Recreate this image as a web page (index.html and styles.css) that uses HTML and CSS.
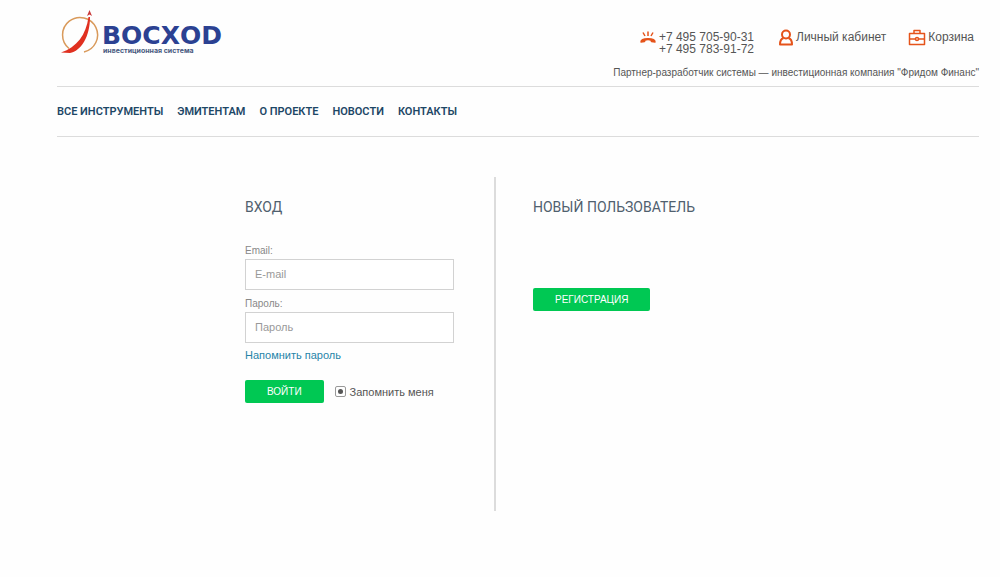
FILE: index.html
```html
<!DOCTYPE html>
<html lang="ru">

<head>
	<meta charset="utf-8">
	<title>Восход — вход</title>
	<meta name="viewport" content="width=device-width, initial-scale=1">
	<link rel="stylesheet" href="styles.css">
</head>

<body>
	<header class="header">
		<a class="logo" href="#">
			<svg class="logo-mark" viewBox="0 0 40 46" aria-hidden="true">
				<path d="M9 38.500A17.500 17.500 0 1 1 24 42" fill="none" stroke="#d99a5b" stroke-width="1.500"/>
				<path d="M1 42.500C17 37 26 25 28.500 7H30C30 27 21 41 10 43Z" fill="#e03020"/>
				<path d="M29.500 0L32 6L29.500 4.500L27 6Z" fill="#c93a3a"/>
			</svg>
			<span class="logo-text">
				<b class="logo-name">ВОСХОD</b>
				<span class="logo-tagline">инвестиционная система</span>
			</span>
		</a>
		<div class="contacts">
			<div class="contacts-row">
				<div class="contact">
					<svg class="icon" viewBox="0 0 18 18" aria-hidden="true">
						<path d="M2 14C2 9.500 16 9.500 16 14L12.500 13.500L12 12Q9 11 6 12L5.500 13.500Z" fill="#e5531a" stroke="#e5531a" stroke-width="1.500" stroke-linejoin="round"/>
						<path d="M9 3.500V8M4 4.500L6 8M14 4.500L12 8" fill="none" stroke="#e5531a" stroke-width="1.500"/>
					</svg>
					<div class="phones">
						<a href="tel:+74957059031">+7 495 705-90-31</a>
						<a href="tel:+74957839172">+7 495 783-91-72</a>
					</div>
				</div>
				<a class="contact" href="#">
					<svg class="icon" viewBox="0 0 18 18" aria-hidden="true">
						<circle cx="10" cy="6.500" r="4" fill="none" stroke="#e5531a" stroke-width="2"/>
						<path d="M7.500 10C4.500 11 4 13 4 16.500H16C16 13 15.500 11 12.500 10" fill="none" stroke="#e5531a" stroke-width="2" stroke-linejoin="round"/>
					</svg>
					Личный кабинет
				</a>
				<a class="contact" href="#">
					<svg class="icon" viewBox="0 0 18 18" aria-hidden="true">
						<path d="M1.500 5.500H16.500V16.500H1.500ZM6 5V2.500H12V5M2 11H7M11 11H16" fill="none" stroke="#e5531a" stroke-width="1.500" stroke-linejoin="round"/>
						<circle cx="9" cy="11" r="1.500" fill="none" stroke="#e5531a" stroke-width="1.500"/>
					</svg>
					Корзина
				</a>
			</div>
			<p class="partner">Партнер-разработчик системы — инвестиционная компания "Фридом Финанс"</p>
		</div>
	</header>

	<nav class="nav">
		<a href="#">ВСЕ ИНСТРУМЕНТЫ</a>
		<a href="#">ЭМИТЕНТАМ</a>
		<a href="#">О ПРОЕКТЕ</a>
		<a href="#">НОВОСТИ</a>
		<a href="#">КОНТАКТЫ</a>
	</nav>

	<main class="auth">
		<section class="login">
			<h1 class="title">ВХОД</h1>
			<form class="form">
				<label class="label" for="email">Email:</label>
				<input class="field" id="email" type="email" placeholder="E-mail">
				<label class="label" for="password">Пароль:</label>
				<input class="field" id="password" type="password" placeholder="Пароль">
				<a class="remind" href="#">Напомнить пароль</a>
				<div class="actions">
					<button class="button" type="submit">ВОЙТИ</button>
					<label class="remember">
						<input type="checkbox" checked>
						Запомнить меня
					</label>
				</div>
			</form>
		</section>
		<section class="register">
			<h2 class="title">НОВЫЙ ПОЛЬЗОВАТЕЛЬ</h2>
			<button class="button" type="button">РЕГИСТРАЦИЯ</button>
		</section>
	</main>
</body>

</html>
```

FILE: styles.css
```css
*,
*::before,
*::after {
	box-sizing: border-box;
}

:root {
	--green: #00c853;
	--line: #dcdcdc;
	--text: #555;
}

body {
	margin: 0;
	padding: 0 21px 0 57px;
	background: #fefefe;
	color: var(--text);
	font-family: "Liberation Sans", Arial, sans-serif;
	font-size: 12px;
	line-height: 12px;
}

a {
	color: inherit;
	text-decoration: none;
}

.header {
	display: flex;
	justify-content: space-between;
	height: 87px;
	border-bottom: 1px solid var(--line);
}

.logo {
	display: flex;
	align-items: flex-start;
	gap: 2px;
	padding: 10px 0 0 3px;
}

.logo-mark {
	width: 40px;
	height: 46px;
}

.logo-text {
	display: flex;
	flex-direction: column;
	padding-top: 14px;
	font-family: "DejaVu Sans", sans-serif;
}

.logo-name {
	color: #2b4192;
	font-size: 25px;
	line-height: 23px;
}

.logo-tagline {
	padding-left: 1px;
	color: #4a5a80;
	font-family: Inter, sans-serif;
	font-size: 7px;
	font-weight: 700;
	line-height: 8px;
}

.contacts {
	display: flex;
	flex-direction: column;
	align-items: flex-end;
	padding-top: 31px;
}

.contacts-row {
	display: flex;
	gap: 22px;
	padding-right: 5px;
}

.contact {
	display: flex;
	gap: 2px;
}

.icon {
	width: 18px;
	height: 18px;
	margin-top: -3px;
}

.phones {
	display: flex;
	flex-direction: column;
	align-items: flex-end;
}

.partner {
	margin: 12px 0 0;
	font-size: 10px;
}

.nav {
	display: flex;
	align-items: center;
	gap: 14px;
	height: 50px;
	border-bottom: 1px solid var(--line);
	color: #1d4766;
	font-family: Roboto, sans-serif;
	font-size: 11px;
	font-weight: 600;
}

.auth {
	display: grid;
	grid-template-columns: 439px 1fr;
	min-height: 334px;
	margin-top: 40px;
}

.login {
	padding: 22px 40px 0 188px;
	border-right: 2px solid var(--line);
}

.register {
	padding: 22px 0 0 37px;

	.button {
		margin-top: 73px;
	}
}

.title {
	margin: 0;
	color: #50606e;
	font-family: Roboto, sans-serif;
	font-size: 14px;
	font-weight: 400;
	line-height: 16px;
}

.form {
	display: flex;
	flex-direction: column;
	padding-top: 27px;
}

.label {
	color: #888;
	font-size: 10px;
	line-height: 17px;
}

.field {
	height: 31px;
	margin-bottom: 5px;
	padding: 0 9px 2px;
	border: 1px solid #d2d2d2;
	background: #fff;
	font: inherit;
	font-size: 11px;

	&::placeholder {
		color: #999;
	}
}

.remind {
	align-self: flex-start;
	color: #2684a8;
	font-size: 11px;
	line-height: 14px;
}

.actions {
	display: flex;
	align-items: center;
	gap: 11px;
	margin-top: 18px;
}

.button {
	height: 23px;
	padding: 0 22px;
	border: none;
	border-radius: 2px;
	background: var(--green);
	color: #fff;
	font: inherit;
	font-size: 10px;
	cursor: pointer;
}

.remember {
	display: flex;
	align-items: center;
	gap: 4px;
	font-size: 11px;

	input {
		appearance: none;
		display: grid;
		place-items: center;
		width: 11px;
		height: 11px;
		margin: 0;
		border: 1px solid #999;
		border-radius: 2px;
	}

	input:checked::before {
		content: "";
		width: 5px;
		height: 5px;
		border-radius: 50%;
		background: #555;
	}
}
```
